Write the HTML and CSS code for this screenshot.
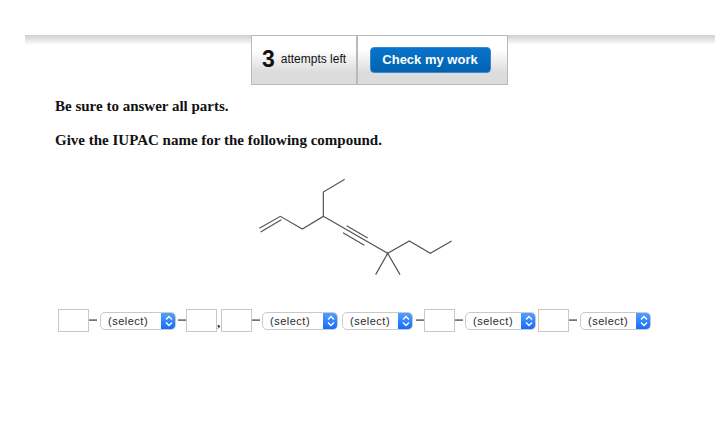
FILE: index.html
```html
<!DOCTYPE html>
<html lang="en">
<head>
<meta charset="utf-8">
<title>Question</title>
<link rel="stylesheet" href="styles.css">
</head>
<body>
<header class="topbar">
  <div class="toolbar">
    <div class="attempts"><span class="count">3</span><span class="label">attempts left</span></div>
    <div class="check"><button class="check-btn" type="button">Check my work</button></div>
  </div>
</header>
<main class="content">
  <p class="line first">Be sure to answer all parts.</p>
  <p class="line second">Give the IUPAC name for the following compound.</p>
  <svg class="molecule" width="210" height="110" viewBox="0 0 630 330" aria-label="Structure">
    <g fill="none" stroke="#555" stroke-width="3.6">
      <path d="M28 175 L91 139 L157 177 L220 139 L220 66 L284 28"/>
      <path d="M32 186 L94 149"/>
      <path d="M220 139 L413 250 L478 213 L541 250 L605 213"/>
      <path d="M290 167 L353 204"/>
      <path d="M279 188 L343 226"/>
      <path d="M377 314 L413 250 L450 314"/>
    </g>
  </svg>
  <div class="answer">
    <span class="box"></span><span class="dash"></span>
    <span class="select w76"><span class="sel-text">(select)</span><span class="stepper"><svg width="10" height="12" viewBox="0 0 10 12"><path d="M2 4.5 L5 1.5 L8 4.5 M2 7.5 L5 10.5 L8 7.5" fill="none" stroke="#fff" stroke-width="1.4"/></svg></span></span>
    <span class="dash after-sel"></span><span class="box"></span><span class="comma">,</span><span class="box"></span><span class="dash"></span>
    <span class="select w76 near"><span class="sel-text">(select)</span><span class="stepper"><svg width="10" height="12" viewBox="0 0 10 12"><path d="M2 4.5 L5 1.5 L8 4.5 M2 7.5 L5 10.5 L8 7.5" fill="none" stroke="#fff" stroke-width="1.4"/></svg></span></span>
    <span class="select w71 wide-gap"><span class="sel-text">(select)</span><span class="stepper"><svg width="10" height="12" viewBox="0 0 10 12"><path d="M2 4.5 L5 1.5 L8 4.5 M2 7.5 L5 10.5 L8 7.5" fill="none" stroke="#fff" stroke-width="1.4"/></svg></span></span>
    <span class="dash after-sel-wide"></span><span class="box"></span><span class="dash"></span>
    <span class="select w71 near"><span class="sel-text">(select)</span><span class="stepper"><svg width="10" height="12" viewBox="0 0 10 12"><path d="M2 4.5 L5 1.5 L8 4.5 M2 7.5 L5 10.5 L8 7.5" fill="none" stroke="#fff" stroke-width="1.4"/></svg></span></span>
    <span class="box after-sel"></span><span class="dash"></span>
    <span class="select w71"><span class="sel-text">(select)</span><span class="stepper"><svg width="10" height="12" viewBox="0 0 10 12"><path d="M2 4.5 L5 1.5 L8 4.5 M2 7.5 L5 10.5 L8 7.5" fill="none" stroke="#fff" stroke-width="1.4"/></svg></span></span>
  </div>
</main>
</body>
</html>
```
FILE: styles.css
```css
html, body { margin: 0; padding: 0; background: #fff; }
body { width: 715px; height: 434px; overflow: hidden; font-family: "Liberation Sans", Arial, sans-serif; }

.topbar {
  margin: 35px 0 0 25px;
  height: 50px;
  background: linear-gradient(#cfcfcf, #ffffff) no-repeat 0 0 / 100% 10px;
}
.toolbar {
  margin-left: 226px;
  width: 257px;
  height: 50px;
  display: flex;
  box-sizing: border-box;
  border: 1px solid #b9b9b9;
  background: linear-gradient(#ffffff 0, #ffffff 30%, #dcdcdc 75%, #dcdcdc 100%);
}
.attempts {
  width: 105px;
  display: flex;
  align-items: center;
  justify-content: center;
  gap: 6px;
  color: #111;
  border-right: 1px solid #b9b9b9;
  padding-bottom: 2px;
  box-sizing: border-box;
}
.count { font-size: 23px; font-weight: bold; }
.label { font-size: 12px; }
.check {
  flex: 1;
  display: flex;
  align-items: center;
  border-left: 1px solid #b9b9b9;
  padding-left: 12px;
}
.check-btn {
  width: 121px;
  height: 26px;
  padding: 0 1px 2px 0;
  border: 1px solid #3a86cf;
  border-radius: 4px;
  background: linear-gradient(#0874cc, #0262b0);
  color: #fff;
  font: bold 13px "Liberation Sans", Arial, sans-serif;
}

.content { padding-left: 55px; }
.line {
  margin: 0;
  font: bold 15px/18px "Liberation Serif", "Times New Roman", serif;
  color: #111;
}
.first { margin-top: 12px; }
.second { margin-top: 16px; }

.molecule { display: block; margin: 21px 0 0 195px; }

.answer {
  display: flex;
  align-items: center;
  height: 23px;
  margin: 29px 0 0 3px;
}
.box {
  width: 31px;
  height: 23px;
  box-sizing: border-box;
  border: 1px solid #c8c8c8;
  background: #fff;
}
.dash {
  width: 8px;
  height: 1px;
  margin: 0 0 1px 0;
  background: #777;
  border-top: 1px solid #999;
}
.comma {
  width: 4px;
  align-self: flex-end;
  font: bold 13px/18px "Liberation Serif", serif;
  color: #222;
  height: 18px;
}
.select {
  display: flex;
  height: 18px;
  box-sizing: border-box;
  margin-left: 3px;
  border: 1px solid #c9c9c9;
  border-radius: 5px;
  background: #fff;
  overflow: hidden;
}
.select.near { margin-left: 2px; }
.select.wide-gap { margin-left: 4px; }
.w76 { width: 76px; }
.w71 { width: 71px; }
.sel-text {
  flex: 1;
  padding-left: 7px;
  font-size: 11px;
  line-height: 16px;
  color: #2b2b2b;
  letter-spacing: 0.5px;
  white-space: nowrap;
}
.stepper {
  width: 15px;
  margin: -1px -1px -1px 0;
  display: flex;
  align-items: center;
  justify-content: center;
  background: linear-gradient(#55a2ff, #1468ff);
}
.after-sel { margin-left: 2px; }
.after-sel-wide { margin-left: 3px; }
```
